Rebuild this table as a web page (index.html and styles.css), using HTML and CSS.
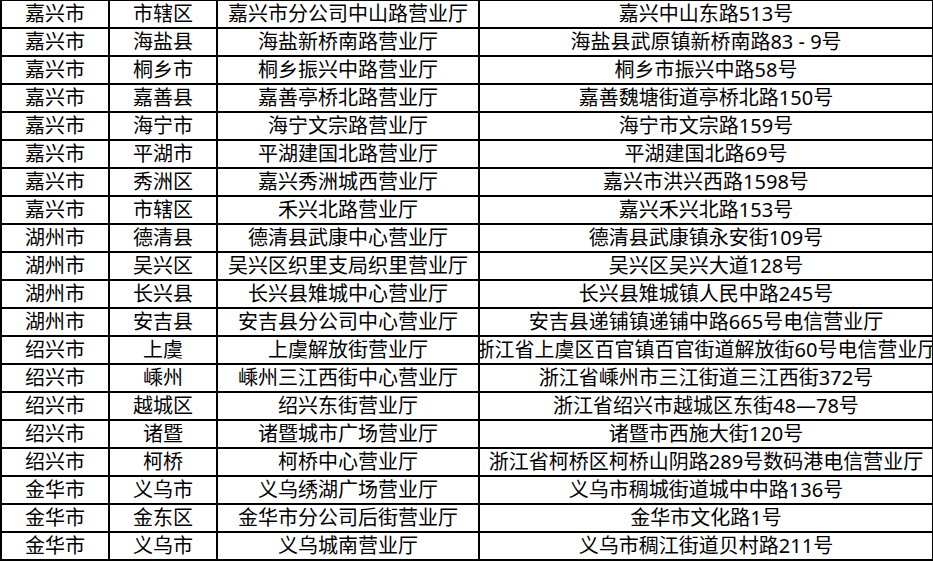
FILE: index.html
```html
<!DOCTYPE html>
<html lang="zh-CN">
<head>
<meta charset="utf-8">
<title>营业厅列表</title>
<link rel="stylesheet" href="styles.css">
</head>
<body>
<table class="sheet">
<colgroup><col class="c1"><col class="c2"><col class="c3"><col class="c4"></colgroup>
<tbody>
<tr><td><div class="cell">嘉兴市</div></td><td><div class="cell">市辖区</div></td><td><div class="cell">嘉兴市分公司中山路营业厅</div></td><td><div class="cell">嘉兴中山东路513号</div></td></tr>
<tr><td><div class="cell">嘉兴市</div></td><td><div class="cell">海盐县</div></td><td><div class="cell">海盐新桥南路营业厅</div></td><td><div class="cell">海盐县武原镇新桥南路83 - 9号</div></td></tr>
<tr><td><div class="cell">嘉兴市</div></td><td><div class="cell">桐乡市</div></td><td><div class="cell">桐乡振兴中路营业厅</div></td><td><div class="cell">桐乡市振兴中路58号</div></td></tr>
<tr><td><div class="cell">嘉兴市</div></td><td><div class="cell">嘉善县</div></td><td><div class="cell">嘉善亭桥北路营业厅</div></td><td><div class="cell">嘉善魏塘街道亭桥北路150号</div></td></tr>
<tr><td><div class="cell">嘉兴市</div></td><td><div class="cell">海宁市</div></td><td><div class="cell">海宁文宗路营业厅</div></td><td><div class="cell">海宁市文宗路159号</div></td></tr>
<tr><td><div class="cell">嘉兴市</div></td><td><div class="cell">平湖市</div></td><td><div class="cell">平湖建国北路营业厅</div></td><td><div class="cell">平湖建国北路69号</div></td></tr>
<tr><td><div class="cell">嘉兴市</div></td><td><div class="cell">秀洲区</div></td><td><div class="cell">嘉兴秀洲城西营业厅</div></td><td><div class="cell">嘉兴市洪兴西路1598号</div></td></tr>
<tr><td><div class="cell">嘉兴市</div></td><td><div class="cell">市辖区</div></td><td><div class="cell">禾兴北路营业厅</div></td><td><div class="cell">嘉兴禾兴北路153号</div></td></tr>
<tr><td><div class="cell">湖州市</div></td><td><div class="cell">德清县</div></td><td><div class="cell">德清县武康中心营业厅</div></td><td><div class="cell">德清县武康镇永安街109号</div></td></tr>
<tr><td><div class="cell">湖州市</div></td><td><div class="cell">吴兴区</div></td><td><div class="cell">吴兴区织里支局织里营业厅</div></td><td><div class="cell">吴兴区吴兴大道128号</div></td></tr>
<tr><td><div class="cell">湖州市</div></td><td><div class="cell">长兴县</div></td><td><div class="cell">长兴县雉城中心营业厅</div></td><td><div class="cell">长兴县雉城镇人民中路245号</div></td></tr>
<tr><td><div class="cell">湖州市</div></td><td><div class="cell">安吉县</div></td><td><div class="cell">安吉县分公司中心营业厅</div></td><td><div class="cell">安吉县递铺镇递铺中路665号电信营业厅</div></td></tr>
<tr><td><div class="cell">绍兴市</div></td><td><div class="cell">上虞</div></td><td><div class="cell">上虞解放街营业厅</div></td><td><div class="cell">浙江省上虞区百官镇百官街道解放街60号电信营业厅</div></td></tr>
<tr><td><div class="cell">绍兴市</div></td><td><div class="cell">嵊州</div></td><td><div class="cell">嵊州三江西街中心营业厅</div></td><td><div class="cell">浙江省嵊州市三江街道三江西街372号</div></td></tr>
<tr><td><div class="cell">绍兴市</div></td><td><div class="cell">越城区</div></td><td><div class="cell">绍兴东街营业厅</div></td><td><div class="cell">浙江省绍兴市越城区东街48—78号</div></td></tr>
<tr><td><div class="cell">绍兴市</div></td><td><div class="cell">诸暨</div></td><td><div class="cell">诸暨城市广场营业厅</div></td><td><div class="cell">诸暨市西施大街120号</div></td></tr>
<tr><td><div class="cell">绍兴市</div></td><td><div class="cell">柯桥</div></td><td><div class="cell">柯桥中心营业厅</div></td><td><div class="cell">浙江省柯桥区柯桥山阴路289号数码港电信营业厅</div></td></tr>
<tr><td><div class="cell">金华市</div></td><td><div class="cell">义乌市</div></td><td><div class="cell">义乌绣湖广场营业厅</div></td><td><div class="cell">义乌市稠城街道城中中路136号</div></td></tr>
<tr><td><div class="cell">金华市</div></td><td><div class="cell">金东区</div></td><td><div class="cell">金华市分公司后街营业厅</div></td><td><div class="cell">金华市文化路1号</div></td></tr>
<tr><td><div class="cell">金华市</div></td><td><div class="cell">义乌市</div></td><td><div class="cell">义乌城南营业厅</div></td><td><div class="cell">义乌市稠江街道贝村路211号</div></td></tr>
</tbody>
</table>
</body>
</html>
```
FILE: styles.css
```css
html, body {
  margin: 0;
  padding: 0;
  background: #fff;
  overflow: hidden;
}
.sheet {
  border-collapse: collapse;
  table-layout: fixed;
  width: 932px;
  margin: -1px 0 0 0;
  font-family: "Noto Sans", "Noto Sans CJK SC", sans-serif;
  font-size: 20px;
  color: #000;
}
.c1 { width: 108px; }
.c2 { width: 108px; }
.c3 { width: 262px; }
.c4 { width: 454px; }
.sheet td {
  border: 2px solid #000;
  padding: 0;
  height: 26px;
}
.cell {
  display: flex;
  justify-content: center;
  align-items: center;
  height: 26px;
  overflow: hidden;
  white-space: nowrap;
  line-height: 26px;
}
```
